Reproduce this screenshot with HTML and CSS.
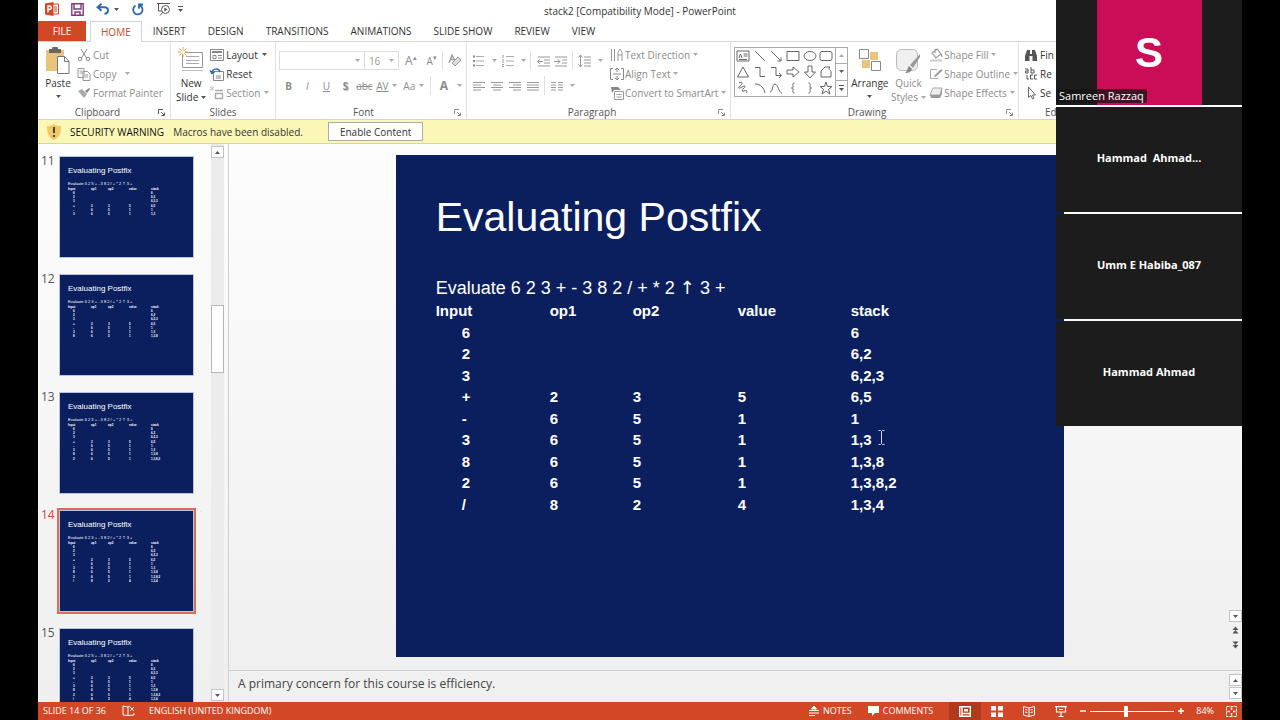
FILE: index.html
```html
<!DOCTYPE html>
<html lang="en">
<head>
    <meta charset="UTF-8">
    <meta name="viewport" content="width=device-width, initial-scale=1.0">
    <title>stack2 [Compatibility Mode] - PowerPoint</title>
    <link rel="stylesheet" href="styles.css">
</head>
<body>
    <svg class="sprite" aria-hidden="true">
        <symbol id="caret" viewBox="0 0 5 3"><path d="M0 0h5L2.500 3z" fill="currentColor"/></symbol>
        <symbol id="caret-up" viewBox="0 0 5 3"><path d="M0 3h5L2.500 0z" fill="currentColor"/></symbol>
        <symbol id="launcher" viewBox="0 0 7 7"><path d="M.5 5V.5H5M3 3l3 3M6.500 3.500v3h-3" fill="none" stroke="currentColor"/></symbol>
    </svg>

    <div class="app">
        <header class="titlebar">
            <div class="quick-access">
                <svg class="logo" viewBox="0 0 14 14"><path d="M8 2h5.500v10H8" fill="#fff" stroke="#d24726"/><path d="M9 5h3M9 7h3M9 9h3" stroke="#d24726"/><path d="M0 1.500L8.500 0v14L0 12.500z" fill="#d24726"/><path d="M3 10.500V4h1.500a1.700 1.700 0 0 1 0 3.500H3" fill="none" stroke="#fff" stroke-width="1.400"/></svg>
                <button class="qa-btn" aria-label="Save"><svg width="13" height="13" viewBox="0 0 13 13"><path d="M.8.8h11.400v11.400H.8zM3 1v5h7V1M4 12V9h5v3" fill="none" stroke="#80397b" stroke-width="1.400"/></svg></button>
                <button class="qa-btn qa-undo" aria-label="Undo"><svg width="14" height="12" viewBox="0 0 14 12"><path d="M5.500.8L1.500 4.300l4 3.500M2 4.300h6.500c5 0 4.500 6 0 6.500" fill="none" stroke="#2b6cb0" stroke-width="1.900"/></svg><svg class="caret"><use href="#caret"/></svg></button>
                <button class="qa-btn" aria-label="Repeat"><svg width="13" height="13" viewBox="0 0 13 13"><path d="M4.500 2.600A4.700 4.700 0 1 0 8.800 2.400M12 1.500H8v4.200" fill="none" stroke="#2b6cb0" stroke-width="1.800"/></svg></button>
                <button class="qa-btn" aria-label="Start from beginning"><svg width="15" height="14" viewBox="0 0 15 14"><path d="M1 1.500h13M2.500 1.500V9H6M7 10l-3 3.500" fill="none" stroke="#555"/><circle cx="9.500" cy="7.500" r="4" fill="#fff" stroke="#555"/><path d="M8.300 5.500l3.200 2-3.200 2z" fill="#555"/></svg></button>
                <button class="qa-btn" aria-label="Customize"><svg width="5" height="6" viewBox="0 0 5 6"><path d="M0 .5h5" stroke="#555"/><path d="M0 3h5L2.500 6z" fill="#555"/></svg></button>
            </div>
            <span class="doc-title">stack2 [Compatibility Mode] - PowerPoint</span>
        </header>

        <nav class="tabs">
            <button class="tab tab-file">FILE</button>
            <button class="tab tab-active">HOME</button>
            <button class="tab">INSERT</button>
            <button class="tab">DESIGN</button>
            <button class="tab">TRANSITIONS</button>
            <button class="tab">ANIMATIONS</button>
            <button class="tab">SLIDE SHOW</button>
            <button class="tab">REVIEW</button>
            <button class="tab">VIEW</button>
        </nav>

        <section class="ribbon">
            <div class="group group-clipboard">
                <div class="group-body">
                    <button class="big-btn"><svg width="24" height="27" viewBox="0 0 24 27"><path d="M0 3h18v21H0z" fill="#eac47a"/><path d="M3 2h3a3 3 0 0 1 6 0h3v4H3z" fill="#666"/><path d="M11.500 9.500h7l4.500 5v12H11.500z" fill="#fff" stroke="#777"/><path d="M18.500 9.500v5H23" fill="none" stroke="#777"/></svg><span>Paste</span><svg class="caret"><use href="#caret"/></svg></button>
                    <div class="small-col dim">
                        <button class="small-btn"><svg class="ico" viewBox="0 0 14 14"><path d="M4 1l5.500 9M10 1L4.500 10" fill="none" stroke="#888"/><circle cx="3" cy="11" r="1.800" fill="none" stroke="#888"/><circle cx="11" cy="11" r="1.800" fill="none" stroke="#888"/></svg>Cut</button>
                        <button class="small-btn"><svg class="ico" viewBox="0 0 14 14"><path d="M1 1.500h6v9H1zM6 4.500h4.500L13 7v6.500H6z" fill="#fff" stroke="#999"/><path d="M2.500 4h3M2.500 6h3M8 8h3M8 10h3" stroke="#999"/></svg>Copy<svg class="caret caret-far"><use href="#caret"/></svg></button>
                        <button class="small-btn"><svg class="ico" viewBox="0 0 14 14"><path d="M1 5l4-2 5 5-3 4z" fill="#aaa"/><path d="M8 5l4-3 1 1-3 4z" fill="#888"/></svg>Format Painter</button>
                    </div>
                </div>
                <div class="group-label"><span>Clipboard</span><button class="launch" aria-label="Clipboard options"><svg><use href="#launcher"/></svg></button></div>
            </div>

            <div class="group group-slides">
                <div class="group-body">
                    <button class="big-btn"><svg width="26" height="27" viewBox="0 0 26 27"><path d="M4.500 5.500h20v15h-20z" fill="#fff" stroke="#999"/><path d="M4 23.500h21" stroke="#bbb"/><path d="M8 9.500h13M8 13.500h13M8 16.500h13" stroke="#aaa"/><path d="M5 0v10M0 5h10M1.500 1.500l7 7M8.500 1.500l-7 7" stroke="#e8a33d"/><circle cx="5" cy="5" r="2" fill="#fff"/></svg><span>New</span><span>Slide <svg class="caret"><use href="#caret"/></svg></span></button>
                    <div class="small-col">
                        <button class="small-btn"><svg class="ico" viewBox="0 0 14 14"><path d="M.5 1.500h13v11H.5z" fill="#fff" stroke="#888"/><path d="M2 4h10" stroke="#888" stroke-width="2"/><path d="M3 7.500h3v3H3zM8 7.500h4M8 10h4" fill="none" stroke="#888"/></svg>Layout<svg class="caret"><use href="#caret"/></svg></button>
                        <button class="small-btn"><svg class="ico" viewBox="0 0 14 14"><path d="M3.500 4.500h10v9h-10z" fill="#fff" stroke="#888"/><path d="M6 9h5M6 11h5" stroke="#888"/><path d="M2 6c0-5 7-5 8-1M.2 3.500L2 6.500l3-2" fill="none" stroke="#2b6cb0" stroke-width="1.500"/></svg>Reset</button>
                        <button class="small-btn dim"><svg class="ico" viewBox="0 0 14 14"><path d="M5 4.500h8M5.500 7.500h7v5h-7z" fill="none" stroke="#aaa" stroke-width="1.400"/><path d="M2 0v5M0 1l4 3M4 1L0 4" stroke="#bbb" stroke-width=".8"/></svg>Section<svg class="caret"><use href="#caret"/></svg></button>
                    </div>
                </div>
                <div class="group-label"><span>Slides</span></div>
            </div>

            <div class="group group-font">
                <div class="group-body tool-rows dim">
                    <div class="tool-row">
                        <select class="combo combo-font" aria-label="Font"><option></option></select>
                        <select class="combo combo-size" aria-label="Font size"><option>16</option></select>
                        <button class="tool tool-grow" aria-label="Increase font size">A<sup>▴</sup></button>
                        <button class="tool tool-grow" aria-label="Decrease font size"><small>A</small><sup>▾</sup></button>
                        <i class="sep"></i>
                        <button class="tool" aria-label="Clear formatting"><svg class="ico" viewBox="0 0 14 14"><path d="M1 9l3-8 3 6M2.500 5.500H6" fill="none" stroke="#999" stroke-width="1.300"/><path d="M4 9l6-6 3 3-6 6z" fill="#ddd" stroke="#999"/></svg></button>
                    </div>
                    <div class="tool-row">
                        <button class="tool tool-letter"><b>B</b></button>
                        <button class="tool tool-letter"><em>I</em></button>
                        <button class="tool tool-letter"><u>U</u></button>
                        <button class="tool tool-letter tool-shadow"><b>S</b></button>
                        <button class="tool tool-letter"><s>abc</s></button>
                        <button class="tool tool-spacing"><u>AV</u><svg class="caret"><use href="#caret"/></svg></button>
                        <button class="tool tool-case">Aa<svg class="caret"><use href="#caret"/></svg></button>
                        <i class="sep"></i>
                        <button class="tool tool-color"><b>A</b><svg class="caret"><use href="#caret"/></svg></button>
                    </div>
                </div>
                <div class="group-label"><span>Font</span><button class="launch dim" aria-label="Font options"><svg><use href="#launcher"/></svg></button></div>
            </div>

            <div class="group group-paragraph">
                <div class="group-body">
                    <div class="tool-rows dim">
                        <div class="tool-row">
                            <button class="tool" aria-label="Bullets"><svg class="ico" viewBox="0 0 14 14"><path d="M4 2.500h8M4 7h8M4 11.500h8" stroke="#aaa"/><path d="M1 2.500h2M1 7h2M1 11.500h2" stroke="#888" stroke-width="2"/></svg><svg class="caret"><use href="#caret"/></svg></button>
                            <button class="tool" aria-label="Numbering"><svg class="ico" viewBox="0 0 14 14"><path d="M5 2.500h8M5 7h8M5 11.500h8" stroke="#aaa"/><path d="M2 1v3M1 6h2M1 8h2M1 10.500h2M1 12.500h2" stroke="#999"/></svg><svg class="caret"><use href="#caret"/></svg></button>
                            <i class="sep"></i>
                            <button class="tool" aria-label="Decrease indent"><svg class="ico" viewBox="0 0 14 14"><path d="M2 3h12M8 6h6M8 9h6M2 12h12M7 7.500H1.500M4 5L1.500 7.500 4 10" fill="none" stroke="#999"/></svg></button>
                            <button class="tool" aria-label="Increase indent"><svg class="ico" viewBox="0 0 14 14"><path d="M1 3h12M8 6h5M8 9h5M1 12h12M0 7.500h6M3.500 5L6 7.500 3.500 10" fill="none" stroke="#999"/></svg></button>
                            <i class="sep"></i>
                            <button class="tool" aria-label="Line spacing"><svg class="ico" viewBox="0 0 14 14"><path d="M6 3h7M6 6h7M6 9h7M6 12h7M2.500 1v12M.5 3.500l2-2.500 2 2.500M.5 10.500l2 2.500 2-2.500" fill="none" stroke="#999"/></svg><svg class="caret"><use href="#caret"/></svg></button>
                        </div>
                        <div class="tool-row">
                            <button class="tool" aria-label="Align left"><svg class="ico" viewBox="0 0 14 14"><path d="M1 3.500h12M1 6h8M1 8.500h12M1 11h8" stroke="#999"/></svg></button>
                            <button class="tool" aria-label="Center"><svg class="ico" viewBox="0 0 14 14"><path d="M1 3.500h12M3 6h8M1 8.500h12M3 11h8" stroke="#999"/></svg></button>
                            <button class="tool" aria-label="Align right"><svg class="ico" viewBox="0 0 14 14"><path d="M1 3.500h12M5 6h8M1 8.500h12M5 11h8" stroke="#999"/></svg></button>
                            <button class="tool" aria-label="Justify"><svg class="ico" viewBox="0 0 14 14"><path d="M1 3.500h12M1 6h12M1 8.500h12M1 11h12" stroke="#999"/></svg></button>
                            <i class="sep"></i>
                            <button class="tool" aria-label="Columns"><svg class="ico" viewBox="0 0 14 14"><path d="M1 3.500h5M1 6h5M1 8.500h5M1 11h5M8 3.500h5M8 6h5M8 8.500h5M8 11h5" stroke="#999"/></svg><svg class="caret"><use href="#caret"/></svg></button>
                        </div>
                    </div>
                    <div class="small-col dim">
                        <button class="small-btn"><svg class="ico" viewBox="0 0 14 14"><path d="M1.500 1v12M4.500 1v12M8 13V4l2-3 2 3v9M8 7h4" fill="none" stroke="#999"/></svg>Text Direction<svg class="caret"><use href="#caret"/></svg></button>
                        <button class="small-btn"><svg class="ico" viewBox="0 0 14 14"><path d="M3 1.500H.5v11H3M11 1.500h2.500v11H11M3 7h8M7 1v4M7 9v4M5 3l2-2 2 2M5 11l2 2 2-2" fill="none" stroke="#888"/></svg>Align Text<svg class="caret"><use href="#caret"/></svg></button>
                        <button class="small-btn"><svg class="ico" viewBox="0 0 14 14"><path d="M1 1h7l3 3H4L2 7z" fill="#888"/><path d="M4.500 5.500h9v8h-9z" fill="#fff" stroke="#999"/><path d="M6.500 8.500h5M6.500 11h5" stroke="#999"/></svg>Convert to SmartArt<svg class="caret"><use href="#caret"/></svg></button>
                    </div>
                </div>
                <div class="group-label"><span>Paragraph</span><button class="launch dim" aria-label="Paragraph options"><svg><use href="#launcher"/></svg></button></div>
            </div>

            <div class="group group-drawing">
                <div class="group-body">
                    <div class="gallery">
                        <div class="shapes">
                            <svg viewBox="0 0 16 16"><path d="M2 3h12v10H2zM4 10l1.500-4L7 10M8.500 6h4M8.500 8h4M4 11.500h8"/></svg>
                            <svg viewBox="0 0 16 16"><path d="M3 3l10 10"/></svg>
                            <svg viewBox="0 0 16 16"><path d="M3 3l10 10M13 9.500V13H9.500"/></svg>
                            <svg viewBox="0 0 16 16"><path d="M2 3.500h12v9H2z"/></svg>
                            <svg viewBox="0 0 16 16"><ellipse cx="8" cy="8" rx="6" ry="4.500"/></svg>
                            <svg viewBox="0 0 16 16"><rect x="2" y="3.500" width="12" height="9" rx="2"/></svg>
                            <svg viewBox="0 0 16 16"><path d="M8 3l5.500 10h-11z"/></svg>
                            <svg viewBox="0 0 16 16"><path d="M3 3.500h5v9h5"/></svg>
                            <svg viewBox="0 0 16 16"><path d="M3 3.500h5v8h5M11 9l2.500 2.500L11 14"/></svg>
                            <svg viewBox="0 0 16 16"><path d="M2 6h6V3l6 5-6 5v-3H2z"/></svg>
                            <svg viewBox="0 0 16 16"><path d="M6 2h4v6h3.500L8 14 2.500 8H6z"/></svg>
                            <svg viewBox="0 0 16 16"><path d="M3 7l4-4h5c-3 3 2 3 1 6v4H3z"/></svg>
                            <svg viewBox="0 0 16 16"><path d="M4 3c4-2 4 1 1 3s-1 3 2 1 4-1 2 1-3 4 0 3 4 0 2 2"/></svg>
                            <svg viewBox="0 0 16 16"><path d="M3 4c6 0 9 4 10 9"/></svg>
                            <svg viewBox="0 0 16 16"><path d="M2 12c3 0 2-8 5-8s4 9 7 9"/></svg>
                            <svg viewBox="0 0 16 16"><path d="M9.500 3C7 3 8 5 8 6.500S7.500 8 6.500 8C7.500 8 8 8 8 9.500S7 13 9.500 13"/></svg>
                            <svg viewBox="0 0 16 16"><path d="M6.500 3C9 3 8 5 8 6.500S8.500 8 9.500 8C8.500 8 8 8 8 9.500S9 13 6.500 13"/></svg>
                            <svg viewBox="0 0 16 16"><path d="M8 2l1.500 4.500H14l-3.500 2.800L12 14l-4-2.800L4 14l1.500-4.700L2 6.500h4.500z"/></svg>
                        </div>
                        <div class="gallery-nav">
                            <button class="dim" aria-label="Previous shapes"><svg class="caret"><use href="#caret-up"/></svg></button>
                            <button aria-label="Next shapes"><svg class="caret"><use href="#caret"/></svg></button>
                            <button aria-label="More shapes"><svg width="5" height="6" viewBox="0 0 5 6"><path d="M0 .5h5" stroke="#555"/><path d="M0 3h5L2.500 6z" fill="#555"/></svg></button>
                        </div>
                    </div>
                    <button class="big-btn btn-arrange"><svg width="24" height="27" viewBox="0 0 24 27"><path d="M12 5h8v8h-8zM4 13h8v8H4z" fill="#eac47a"/><path d="M1.500 2.500h9v9h-9zM13.500 14.500h9v9h-9z" fill="#fff" stroke="#888"/></svg><span>Arrange</span><svg class="caret"><use href="#caret"/></svg></button>
                    <button class="big-btn dim"><svg width="26" height="27" viewBox="0 0 26 27"><rect x="1.500" y="2.500" width="21" height="21" rx="5" fill="#f0f0f0" stroke="#bbb"/><path d="M25 7L15 18l3 3 7-11z" fill="#999"/><path d="M14 19l3 3c-1 4-5 4-7 4 3-2 2-5 4-7z" fill="#888"/></svg><span>Quick</span><span>Styles <svg class="caret"><use href="#caret"/></svg></span></button>
                    <div class="small-col dim">
                        <button class="small-btn"><svg class="ico" viewBox="0 0 14 14"><path d="M3 5l5-4 4 5-5 4zM6 5V1M12 6l1 3" fill="none" stroke="#999" stroke-width="1.200"/><path d="M1 12.500h12" stroke="#ccc" stroke-width="2"/></svg>Shape Fill<svg class="caret"><use href="#caret"/></svg></button>
                        <button class="small-btn"><svg class="ico" viewBox="0 0 14 14"><path d="M8 2.500H1.500v9h8" fill="none" stroke="#aaa"/><path d="M5 9l7-7 1.500 1.500-7 6.500z" fill="#999"/></svg>Shape Outline<svg class="caret"><use href="#caret"/></svg></button>
                        <button class="small-btn"><svg class="ico" viewBox="0 0 14 14"><path d="M4 2h9l-2 7H1z" fill="#eee" stroke="#aaa"/><path d="M1 9l1 3h9l2-4V2l-2 7z" fill="#999"/></svg>Shape Effects<svg class="caret"><use href="#caret"/></svg></button>
                    </div>
                </div>
                <div class="group-label"><span>Drawing</span><button class="launch dim" aria-label="Drawing options"><svg><use href="#launcher"/></svg></button></div>
            </div>

            <div class="group group-editing">
                <div class="group-body">
                    <div class="small-col">
                        <button class="small-btn"><svg class="ico" viewBox="0 0 14 14"><path d="M3 2h3v4h2V2h3l2 6v5H8.500V8h-3v5H1V8z" fill="#555"/></svg>Fin</button>
                        <button class="small-btn"><svg class="ico" viewBox="0 0 14 14"><path d="M1 2h3v4H1.500V4H4M7 0v6h3V3H7M3 8v4h2M9 8H6.500v4H9M13 8h-2.500v4H13" fill="none" stroke="#555"/></svg>Re</button>
                        <button class="small-btn"><svg class="ico" viewBox="0 0 14 14"><path d="M4.500 1v10.500l2.500-2 1.500 3.500 1.500-1-1.500-3h3z" fill="#fff" stroke="#666"/></svg>Se</button>
                    </div>
                </div>
                <div class="group-label"><span>Ed</span></div>
            </div>
        </section>

        <section class="warning">
            <svg class="shield" viewBox="0 0 14 16"><path d="M7 0c2 1.500 4 2 7 2 0 7-1 11-7 14C1 13 0 9 0 2c3 0 5-.5 7-2z" fill="#f2c766"/><path d="M7 3v6M7 11v2" stroke="#444" stroke-width="2"/></svg>
            <strong>SECURITY WARNING</strong>
            <span>Macros have been disabled.</span>
            <button class="enable">Enable Content</button>
        </section>

        <main class="work">
            <aside class="thumbs">
                <ol class="thumb-list" id="thumb-list"></ol>
                <div class="scroll scroll-thumbs">
                    <button class="scroll-btn" aria-label="Scroll up"><svg class="caret"><use href="#caret-up"/></svg></button>
                    <div class="scroll-track"><div class="scroll-handle"></div></div>
                    <button class="scroll-btn" aria-label="Scroll down"><svg class="caret"><use href="#caret"/></svg></button>
                </div>
            </aside>

            <div class="editor">
                <div class="stage">
                    <div class="canvas">
                        <div class="slide" id="slide"></div>
                    </div>
                    <div class="scroll stage-scroll">
                        <button class="scroll-btn" aria-label="Scroll down"><svg class="caret"><use href="#caret"/></svg></button>
                        <button class="page-btn" aria-label="Previous slide"><svg width="7" height="8" viewBox="0 0 7 8"><path d="M.5 4l3-3.500 3 3.500zM.5 7.500l3-3.500 3 3.500z" fill="#555"/></svg></button>
                        <button class="page-btn" aria-label="Next slide"><svg width="7" height="8" viewBox="0 0 7 8"><path d="M.5.5l3 3.500 3-3.500zM.5 4l3 3.500 3-3.500z" fill="#555"/></svg></button>
                    </div>
                </div>
                <div class="notes">
                    <textarea class="notes-text" rows="1" aria-label="Notes">A primary concern for this course is efficiency.</textarea>
                    <div class="scroll notes-scroll">
                        <button class="scroll-btn" aria-label="Scroll notes up"><svg class="caret"><use href="#caret-up"/></svg></button>
                        <button class="scroll-btn" aria-label="Scroll notes down"><svg class="caret"><use href="#caret"/></svg></button>
                    </div>
                </div>
            </div>
        </main>

        <footer class="status">
            <span>SLIDE 14 OF 36</span>
            <button class="status-btn status-proof" aria-label="Proofing"><svg width="13" height="12" viewBox="0 0 13 12"><path d="M6 10.500V2L1 1v9zM6 2l2-1M6 10.500l6-.5V8M8 2l4 4M12 2L8 6" fill="none" stroke="#fff"/></svg></button>
            <button class="status-btn">ENGLISH (UNITED KINGDOM)</button>
            <div class="status-right">
                <button class="status-btn status-notes"><svg width="10" height="10" viewBox="0 0 10 10"><path d="M5 0l2.500 3h-5zM0 4.500h10M0 7h10M0 9.500h6" fill="#fff" stroke="#fff"/></svg>NOTES</button>
                <button class="status-btn status-comments"><svg width="11" height="10" viewBox="0 0 11 10"><path d="M0 0h11v7H7l-3 3V7H0z" fill="#fff"/></svg>COMMENTS</button>
                <div class="views">
                    <button class="view view-active" aria-label="Normal"><svg width="12" height="11" viewBox="0 0 12 11"><path d="M.7.7h10.600v9.600H.7zM3 1v9M3 7.500h8" fill="none" stroke="#fff" stroke-width="1.400"/><path d="M5 3h4v2.500H5z" fill="#fff"/></svg></button>
                    <button class="view" aria-label="Slide sorter"><svg width="12" height="11" viewBox="0 0 12 11"><path d="M0 0h5v4.500H0zM7 0h5v4.500H7zM0 6.500h5V11H0zM7 6.500h5V11H7z" fill="#fff"/></svg></button>
                    <button class="view" aria-label="Reading view"><svg width="12" height="11" viewBox="0 0 12 11"><path d="M6 2v8.500L.5 9V.5zM6 2l5.500-1.500V9L6 10.500M2 3.500l2.500.5M2 6l2.500.5M7.500 4l2.500-.5M7.500 6.500L10 6" fill="none" stroke="#fff"/></svg></button>
                    <button class="view" aria-label="Slide show"><svg width="12" height="11" viewBox="0 0 12 11"><path d="M0 .7h12M1.500.7V6h9V.7M6 6v4M3.500 10.500h5M4 3.500h4" fill="none" stroke="#fff" stroke-width="1.200"/></svg></button>
                </div>
                <button class="status-btn zoom-step" aria-label="Zoom out"><svg width="6" height="6" viewBox="0 0 6 6"><path d="M0 3h6" stroke="#fff" stroke-width="1.500"/></svg></button>
                <input class="zoom" type="range" min="0" max="100" value="42" aria-label="Zoom">
                <button class="status-btn zoom-step" aria-label="Zoom in"><svg width="6" height="6" viewBox="0 0 6 6"><path d="M0 3h6M3 0v6" stroke="#fff" stroke-width="1.500"/></svg></button>
                <button class="status-btn zoom-value">84%</button>
                <button class="status-btn" aria-label="Fit slide"><svg width="11" height="11" viewBox="0 0 11 11"><path d="M.5.500h10v10H.5z" fill="none" stroke="#fff" stroke-dasharray="3 1"/><path d="M5.500 1.500v2.500M5.500 7v2.500M1.500 5.500H4M7 5.500h2.500" stroke="#fff" stroke-width="1.500"/></svg></button>
            </div>
        </footer>

        <!-- meeting participants, floating over the window -->
        <aside class="participants">
            <div class="tile tile-avatar"><div class="avatar">S</div><span class="name-tag">Samreen Razzaq</span></div>
            <div class="tile">Hammad&nbsp; Ahmad...</div>
            <div class="tile">Umm E Habiba_087</div>
            <div class="tile">Hammad Ahmad</div>
        </aside>
    </div>

    <script src="script.js"></script>
</body>
</html>
```
FILE: styles.css
```css
* {
    box-sizing: border-box;
}

body {
    margin: 0;
    background: #000;
    color: #333;
    font-family: "Open Sans", "Noto Sans", sans-serif;
    font-size: 10px;
    line-height: 14px;
}

button {
    display: flex;
    align-items: center;
    justify-content: center;
    padding: 0;
    border: 0;
    background: none;
    color: inherit;
    font: inherit;
    white-space: nowrap;
}

svg {
    flex: none;
}

.sprite {
    display: none;
}

.app {
    position: relative;
    display: flex;
    flex-direction: column;
    height: 100vh;
    margin: 0 38px;
    background: #fff;
    overflow: hidden;
}

.caret {
    width: 5px;
    height: 3px;
    color: #555;
}

.ico {
    width: 14px;
    height: 14px;
}

.dim {
    color: #8c8c8c;
}

.dim .caret {
    color: #aaa;
}

/* title bar */
.titlebar {
    display: grid;
    grid-template-columns: 1fr auto 1fr;
    align-items: center;
    height: 21px;
}

.quick-access {
    display: flex;
    align-items: center;
    gap: 12px;
    height: 18px;
    padding-left: 7px;
    align-self: start;
}

.logo {
    width: 14px;
    height: 14px;
}

.qa-undo {
    gap: 4px;
}

.qa-btn:last-child {
    margin-left: -5px;
}

/* tabs */
.tabs {
    display: flex;
    height: 21px;
    border-bottom: 1px solid #d4d4d4;
}

.tab {
    padding: 0 11px;
}

.tab-file {
    width: 48px;
    margin-right: 4px;
    background: #d24726;
    color: #fff;
}

.tab-active {
    height: 21px;
    border: 1px solid #d4d4d4;
    border-bottom: 0;
    background: #fff;
    color: #d24726;
    padding: 0 10px;
}

/* ribbon */
.ribbon {
    display: flex;
    height: 78px;
    border-bottom: 1px solid #d4d4d4;
    overflow: hidden;
}

.group {
    display: flex;
    flex: none;
    flex-direction: column;
    padding: 3px 0 0 5px;
    border-right: 1px solid #e1e1e1;
}

.group-clipboard { width: 133px; }
.group-slides { width: 105px; }
.group-font { width: 191px; }
.group-paragraph { width: 264px; }
.group-drawing { width: 288px; }

.group-font,
.group-drawing {
    padding-left: 3px;
}

.group-editing {
    border-right: 0;
}

.group-body {
    display: flex;
    flex: 1;
}

.group-label {
    display: flex;
    align-items: center;
    height: 14px;
    padding-right: 5px;
    color: #555;
}

.group-label span {
    flex: 1;
    text-align: center;
}

.group-editing .group-label {
    padding-left: 21px;
}

.launch {
    margin-left: 6px;
}

.launch svg {
    width: 7px;
    height: 7px;
}

.big-btn {
    flex-direction: column;
    justify-content: flex-start;
    min-width: 30px;
    margin-right: 4px;
    padding-top: 2px;
}

.big-btn span {
    display: flex;
    align-items: center;
    gap: 3px;
    height: 14px;
    margin-top: 2px;
}

.big-btn span + span {
    margin-top: 0;
}

.big-btn span + .caret {
    margin-top: 5px;
}

.small-col {
    display: flex;
    flex-direction: column;
}

.small-btn {
    justify-content: flex-start;
    gap: 2px;
    height: 19px;
}

.small-btn .caret {
    margin-left: 2px;
}

.small-btn .caret-far {
    margin-left: 7px;
}

.group-drawing .small-btn,
.group-paragraph .small-btn {
    gap: 1px;
}

.tool-rows {
    display: flex;
    flex-direction: column;
    gap: 6px;
    padding-top: 6px;
}

.tool-row {
    display: flex;
    align-items: center;
    height: 19px;
}

.combo {
    height: 19px;
    padding: 0 4px;
    border: 1px solid #ddd;
    background: #fff url("data:image/svg+xml,%3Csvg xmlns='http://www.w3.org/2000/svg' width='5' height='3'%3E%3Cpath d='M0 0h5L2.500 3z' fill='%23aaa'/%3E%3C/svg%3E") no-repeat right 4px center;
    color: #999;
    font: inherit;
    appearance: none;
}

.combo-font {
    width: 87px;
}

.combo-size {
    width: 34px;
    border-left: 0;
}

.tool {
    gap: 6px;
    margin-right: 4px;
}

.tool sup {
    font-size: 7px;
    line-height: 7px;
    align-self: flex-start;
}

.tool small {
    font-size: 10px;
}

.tool-grow {
    gap: 0;
    width: 17px;
    margin: 0 0 0 4px;
    font-size: 12px;
}

.tool-letter {
    width: 19px;
    margin: 0;
}

.tool-shadow {
    text-shadow: 1px 1px 1px #bbb;
}

.tool-spacing {
    gap: 4px;
    width: 26px;
    margin: 0;
}

.tool-case {
    gap: 4px;
    width: 28px;
    margin: 0;
}

.tool-color {
    gap: 9px;
    margin-left: 4px;
    font-size: 12px;
}

.sep {
    width: 1px;
    height: 19px;
    margin: 0 5px 0 2px;
    background: #e1e1e1;
}

.group-paragraph .tool-rows {
    width: 138px;
}

.group-paragraph .sep {
    margin: 0 5px 0 0;
}

.gallery {
    display: flex;
    height: 50px;
    margin: 2px 4px 0 0;
    border: 1px solid #ababab;
}

.shapes {
    display: grid;
    grid-template-columns: repeat(6, 1fr);
    width: 100px;
}

.shapes svg {
    width: 16px;
    height: 16px;
    fill: none;
    stroke: #666;
}

.gallery-nav {
    display: flex;
    flex-direction: column;
    width: 12px;
    border-left: 1px solid #ababab;
}

.gallery-nav button {
    flex: 1;
}

.gallery-nav button + button {
    border-top: 1px solid #ababab;
}

/* message bar */
.warning {
    display: flex;
    align-items: center;
    height: 24px;
    padding-left: 9px;
    border-bottom: 1px solid #d9d59a;
    background: #fbf7b6;
}

.warning strong {
    margin: 0 9px;
    font-weight: 400;
    color: #111;
}

.shield {
    width: 14px;
    height: 16px;
}

.enable {
    height: 19px;
    margin-left: 25px;
    padding: 0 11px;
    border: 1px solid #ababab;
    background: #fff;
}

/* work area */
.work {
    display: flex;
    flex: 1;
    min-height: 0;
    background: linear-gradient(#fdfdfd, #efefef);
}

.thumbs {
    display: flex;
    justify-content: space-between;
    width: 191px;
    padding-right: 4px;
    border-right: 1px solid #d0d0d0;
}

.thumb-list {
    display: flex;
    flex-direction: column;
    gap: 16px;
    margin: 0;
    padding: 12px 0 0 3px;
    list-style: none;
    overflow: hidden;
}

.thumb-item {
    display: flex;
    flex: none;
    gap: 3px;
    width: 158px;
}

.thumb-num {
    width: 15px;
    color: #555;
    font-size: 12px;
    line-height: 10px;
}

.thumb {
    width: 135px;
    height: 102px;
    padding: 8px;
    border: 1px solid #b9c3e6;
    background: #0b1f5f;
    color: #fff;
    font-family: "Liberation Sans", Arial, sans-serif;
    overflow: hidden;
}

.thumb-current .thumb-num {
    color: #d24726;
}

.thumb-current .thumb {
    outline: 2px solid #dd6e55;
}

.thumb .slide-title {
    margin: 0 0 6px;
    font-size: 8px;
    line-height: 11px;
}

.thumb .slide-expr {
    margin: 0 0 1px;
    font-size: 4px;
    line-height: 4px;
}

.thumb .trace {
    font-size: 3px;
    line-height: 4px;
}

.thumb .trace tr:nth-child(4n) {
    height: 5px;
}

.thumb .trace td:first-child {
    padding-left: 5px;
}

.scroll {
    display: flex;
    flex-direction: column;
    width: 13px;
}

.scroll-thumbs {
    background: #ececec;
    padding: 2px 0 1px;
}

.scroll-btn {
    width: 13px;
    height: 12px;
    border: 1px solid #c4c4c4;
    background: #fff;
}

.scroll-track {
    flex: 1;
    padding-top: 147px;
}

.scroll-handle {
    height: 68px;
    border: 1px solid #b5b5b5;
    background: #fff;
}

.editor {
    display: flex;
    flex: 1;
    flex-direction: column;
    min-width: 0;
}

.stage {
    display: flex;
    flex: 1;
    min-height: 0;
}

.canvas {
    display: flex;
    flex: 1;
    align-items: center;
    justify-content: center;
    padding: 0 0 2px 2px;
}

.stage-scroll {
    justify-content: flex-end;
    padding-bottom: 18px;
}

.page-btn {
    height: 14px;
    margin-top: 1px;
}

.slide {
    position: relative;
    width: 67%;
    aspect-ratio: 4 / 3;
    padding: 38px 40px;
    background: #0b1f5f;
    color: #fff;
    font-family: "Liberation Sans", Arial, sans-serif;
}

.slide-title {
    margin: 0 0 36px;
    font-size: 41px;
    font-weight: 400;
    line-height: 48px;
}

.slide-expr {
    margin: 0 0 1px;
    font-size: 18px;
    line-height: 22px;
    white-space: nowrap;
}

.arrow {
    font-family: "DejaVu Sans", sans-serif;
    line-height: 1;
}

.trace {
    width: 100%;
    border-collapse: collapse;
    table-layout: fixed;
    font-size: 15px;
    font-weight: 700;
    line-height: 21px;
    text-align: left;
}

.trace th,
.trace td {
    padding: 0;
}

.trace td:first-child {
    padding-left: 26px;
}

.slide .trace tbody tr:nth-child(odd) {
    height: 22px;
}

.col-input { width: 114px; }
.col-op1 { width: 83px; }
.col-op2 { width: 105px; }
.col-value { width: 113px; }

.thumb .col-input { width: 23px; }
.thumb .col-op1 { width: 17px; }
.thumb .col-op2 { width: 21px; }
.thumb .col-value { width: 22px; }

/* pointer resting on the slide */
.ibeam {
    position: absolute;
    left: 482px;
    top: 275px;
    width: 7px;
    height: 15px;
}

.notes {
    display: flex;
    height: 32px;
    border-top: 1px solid #d0d0d0;
    background: #f0f0f0;
}

.notes-text {
    flex: 1;
    padding: 5px 9px;
    border: 0;
    background: none;
    color: #444;
    font: inherit;
    font-size: 12px;
    line-height: 16px;
    resize: none;
    overflow: hidden;
}

.notes-scroll {
    gap: 1px;
    justify-content: center;
}

/* status bar */
.status {
    display: flex;
    align-items: center;
    height: 18px;
    padding: 0 5px;
    background: #d24726;
    color: #fff;
    font-size: 9px;
}

.status-proof {
    margin: 0 14px 0 16px;
}

.status-right {
    display: flex;
    align-items: center;
    margin-left: auto;
}

.status-notes,
.status-comments {
    gap: 4px;
    margin-right: 16px;
}

.views {
    display: flex;
}

.view {
    width: 32px;
    height: 18px;
}

.view-active {
    background: #b03a1e;
}

.zoom-step {
    width: 12px;
}

.zoom {
    width: 84px;
    height: 12px;
    margin: 0 1px;
    background: linear-gradient(#fff, #fff) center / 100% 1px no-repeat;
    appearance: none;
}

.zoom::-webkit-slider-thumb {
    width: 4px;
    height: 11px;
    background: #fff;
    appearance: none;
}

.zoom-value {
    margin: 0 12px 0 9px;
}

/* participants */
.participants {
    position: absolute;
    top: 0;
    right: 0;
    display: flex;
    flex-direction: column;
    gap: 2px;
    width: 186px;
    color: #fff;
    font-size: 11px;
    font-weight: 700;
}

.tile {
    position: relative;
    display: flex;
    align-items: center;
    justify-content: center;
    height: 105px;
    padding-bottom: 3px;
    background: #1c1c1c;
}

.tile-avatar {
    padding: 0;
}

.avatar {
    display: flex;
    align-items: center;
    justify-content: center;
    width: 105px;
    height: 105px;
    background: #cb0c56;
    font-family: "Liberation Sans", Arial, sans-serif;
    font-size: 42px;
}

.name-tag {
    position: absolute;
    left: 0;
    bottom: 2px;
    padding: 0 3px;
    border-radius: 2px;
    background: rgba(20, 20, 20, 0.75);
    font-weight: 400;
}
```
FILE: script.js
```js
const steps = [
    ['6', '', '', '', '6'],
    ['2', '', '', '', '6,2'],
    ['3', '', '', '', '6,2,3'],
    ['+', '2', '3', '5', '6,5'],
    ['-', '6', '5', '1', '1'],
    ['3', '6', '5', '1', '1,3'],
    ['8', '6', '5', '1', '1,3,8'],
    ['2', '6', '5', '1', '1,3,8,2'],
    ['/', '8', '2', '4', '1,3,4']
];

// slide number -> how many steps of the trace it shows
const slides = { 11: 6, 12: 7, 13: 8, 14: 9, 15: 9 };
const current = 14;

function slideContent(count) {
    const rows = steps.slice(0, count)
        .map((step) => `<tr>${step.map((value) => `<td>${value}</td>`).join('')}</tr>`)
        .join('');
    return `
        <h2 class="slide-title">Evaluating Postfix</h2>
        <p class="slide-expr">Evaluate 6 2 3 + - 3 8 2 / + * 2 <span class="arrow">↑</span> 3 +</p>
        <table class="trace">
            <thead><tr>
                <th class="col-input">Input</th><th class="col-op1">op1</th><th class="col-op2">op2</th>
                <th class="col-value">value</th><th>stack</th>
            </tr></thead>
            <tbody>${rows}</tbody>
        </table>`;
}

const list = document.getElementById('thumb-list');
for (const number of Object.keys(slides)) {
    const item = document.createElement('li');
    item.className = 'thumb-item' + (Number(number) === current ? ' thumb-current' : '');
    item.innerHTML = `<span class="thumb-num">${number}</span><div class="thumb">${slideContent(slides[number])}</div>`;
    list.appendChild(item);
}

document.getElementById('slide').innerHTML = slideContent(slides[current]) +
    `<svg class="ibeam" viewBox="0 0 7 15"><path d="M.5.5h2l1 1 1-1h2M3.500 1.500v12M.5 14.500h2l1-1 1 1h2" fill="none" stroke="#cdd3ea"/></svg>`;
```
